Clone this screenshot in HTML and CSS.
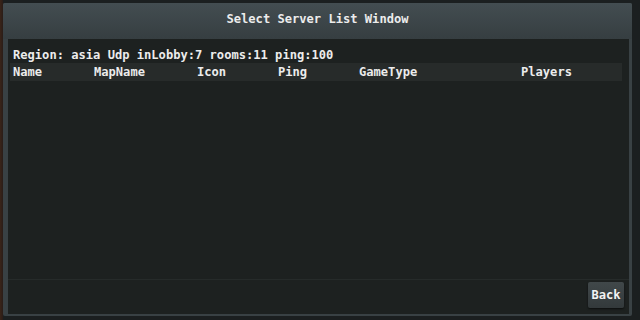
FILE: index.html
```html
<!DOCTYPE html>
<html lang="en">
  <head>
    <meta name="viewport" content="width=device-width, initial-scale=1" />
    <title>Select Server List Window</title>
    <link rel="stylesheet" href="styles.css">
  </head>

  <body>
    <div class="scene">
      <div class="window">
        <div class="title">Select Server List Window</div>

        <div class="panel">
          <div class="info">Region: asia Udp inLobby:7 rooms:11 ping:100</div>

          <div class="header">
            <span>Name</span>
            <span>MapName</span>
            <span>Icon</span>
            <span>Ping</span>
            <span>GameType</span>
            <span>Players</span>
          </div>

          <div class="list"></div>

          <div class="footer">
            <button class="btn">Back</button>
          </div>
        </div>
      </div>
    </div>
  </body>
</html>
```

FILE: styles.css
```css
body {
  margin: 0;
  background-color: #1b1d1d;
  font-family: "DejaVu Sans Mono", monospace;
  font-weight: bold;
  font-size: 12.1px;
  color: #ececec;
}

.scene {
  height: 320px;
  padding: 3px 8px 0 3px;
  box-sizing: border-box;
  background: linear-gradient(90deg, #3a2418 0px, #2a1d18 3px, #1b1f20 3px);
}

.window {
  height: 313px;
  display: flex;
  flex-direction: column;
  background: #394144;
  border-radius: 2px;
}

.title {
  height: 36px;
  line-height: 33px;
  text-align: center;
  background: linear-gradient(#434d51, #363e41);
  border-radius: 2px 2px 0 0;
}

.panel {
  flex: 1;
  margin: 0 3px 2px 5px;
  background: #1d2120;
  display: flex;
  flex-direction: column;
}

.info {
  padding: 8px 5px 0 5px;
  height: 16px;
  line-height: 16px;
}

.header {
  display: grid;
  grid-template-columns: 81px 103px 81px 81px 162px 1fr;
  margin: 0 7px 0 2px;
  padding-left: 3px;
  height: 18px;
  line-height: 19px;
  background: #272b2a;
}

.list {
  flex: 1;
  border-bottom: 1px solid #262b2a;
}

.footer {
  display: flex;
  justify-content: flex-end;
  padding: 2px 5px 6px 0;
}

.btn {
  width: 36px;
  height: 26px;
  padding: 0;
  border: none;
  border-radius: 2px;
  font: inherit;
  color: #f2f2f2;
  background: linear-gradient(#41484a, #33393b);
  box-shadow: 0 1px 2px rgba(0, 0, 0, 0.6);
}
```
